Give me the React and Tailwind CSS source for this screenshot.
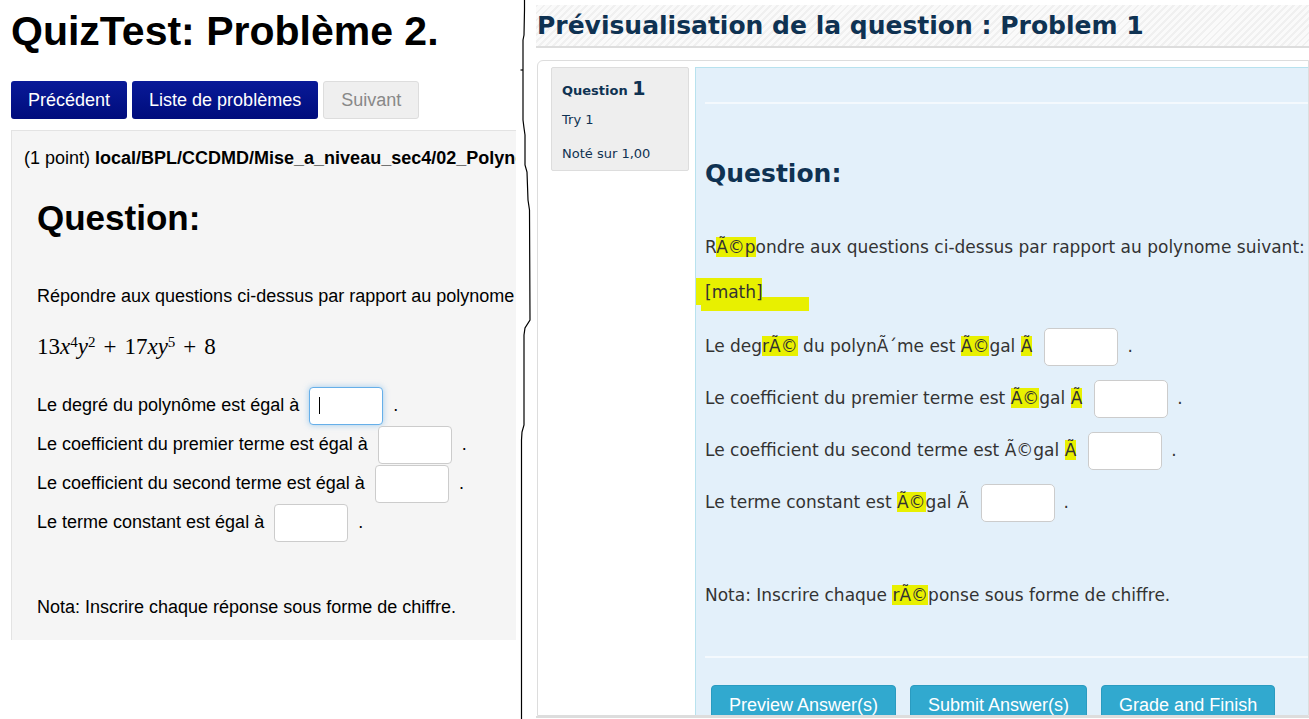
import React from 'react';

const hl = 'bg-[#e8f000]';

function LeftRow({ label, focused }) {
  return (
    <div className="flex items-center h-[39px]">
      <span>{label}</span>
      {focused ? (
        <div className="ml-[10px] w-[74px] h-[38px] rounded-[4px] border border-[#66afe9] bg-white shadow-[0_0_6px_rgba(102,175,233,0.6)] flex items-center pl-[9px]">
          <span className="block w-px h-[17px] bg-black" />
        </div>
      ) : (
        <div className="ml-[10px] w-[74px] h-[38px] rounded-[4px] border border-[#cccccc] bg-white" />
      )}
      <span className="ml-[10px]">.</span>
    </div>
  );
}

function RightRow({ children }) {
  return (
    <div className="flex items-center h-[52px]">
      <span className="whitespace-pre">{children}</span>
      <div className="ml-[12px] w-[74px] h-[38px] rounded-[5px] border border-[#cccccc] bg-white" />
      <span className="ml-[9px]">.</span>
    </div>
  );
}

function Divider() {
  return (
    <div className="w-[20px] shrink-0 h-[719px]">
      <svg width="20" height="719" viewBox="516 0 20 719" fill="none" stroke="#000" strokeWidth="1.2">
        <polyline points="524.5,0 524.5,10 524,35 523,40 523,120 524,128 525,135 525,165 527,172 528,200 529.5,210 530,320 525,328 524,335 524,425 522,432 521.5,440 521.5,719" />
        <line x1="520.5" y1="70" x2="523" y2="70" />
      </svg>
    </div>
  );
}

export default function App() {
  return (
    <div className="flex w-[1309px] h-[719px] overflow-hidden bg-white">
      {/* WeBWorK side */}
      <div className="w-[516px] shrink-0 overflow-hidden font-['Liberation_Sans',Arial,sans-serif] text-black">
        <h1 className="ml-[11px] mt-[7px] text-[41px] leading-[48px] font-bold whitespace-nowrap">QuizTest: Problème 2.</h1>
        <div className="flex gap-[5px] ml-[11px] mt-[26px]">
          <button className="h-[38px] px-[17px] rounded-[3px] bg-gradient-to-b from-[#0a1a98] to-[#000c7c] text-white text-[18px]">Précédent</button>
          <button className="h-[38px] px-[17px] rounded-[3px] bg-gradient-to-b from-[#0a1a98] to-[#000c7c] text-white text-[18px]">Liste de problèmes</button>
          <button className="h-[38px] px-[17px] rounded-[3px] bg-[#efefef] border border-[#dddddd] text-[#888888] text-[18px]">Suivant</button>
        </div>
        <div className="ml-[11px] mt-[11px] w-[520px] h-[510px] bg-[#f5f5f5] border-l border-t border-[#e3e3e3] text-[18px]">
          <div className="pl-[12px] pt-[16px] leading-[22px] whitespace-nowrap">
            (1 point) <span className="font-bold">local/BPL/CCDMD/Mise_a_niveau_sec4/02_Polynomes/probleme2.pg</span>
          </div>
          <div className="pl-[25px]">
            <h2 className="mt-[29px] text-[35px] leading-[40px] font-bold">Question:</h2>
            <p className="mt-[47px] leading-[22px] whitespace-nowrap">Répondre aux questions ci-dessus par rapport au polynome suivant:</p>
            <p className="mt-[27px] leading-[26px] font-['Liberation_Serif','Times_New_Roman',serif] text-[23px] whitespace-nowrap">
              13<i>x</i><sup className="text-[15px]">4</sup><i>y</i><sup className="text-[15px]">2</sup>
              <span className="mx-[8px]">+</span>17<i>xy</i><sup className="text-[15px]">5</sup>
              <span className="mx-[8px]">+</span>8
            </p>
            <div className="mt-[26px]">
              <LeftRow label="Le degré du polynôme est égal à" focused />
              <LeftRow label="Le coefficient du premier terme est égal à" />
              <LeftRow label="Le coefficient du second terme est égal à" />
              <LeftRow label="Le terme constant est égal à" />
            </div>
            <p className="mt-[54px] leading-[22px]">Nota: Inscrire chaque réponse sous forme de chiffre.</p>
          </div>
        </div>
      </div>

      <Divider />

      {/* Moodle side */}
      <div className="flex-1 min-w-0 font-['DejaVu_Sans',Verdana,sans-serif] text-[#333333]">
        <div className="mt-[5px] h-[43px] border-b-2 border-[#dddddd] bg-[repeating-linear-gradient(135deg,#f0f0f0_0px,#f0f0f0_2px,#fafafa_2px,#fafafa_5px)] flex items-center">
          <h1 className="pl-[1px] text-[25px] font-bold text-[#0f3252] whitespace-nowrap">Prévisualisation de la question : Problem 1</h1>
        </div>
        <div className="mt-[12px] ml-[1px] h-[656px] border border-[#dddddd] rounded-tl-[6px] flex gap-[6px] pl-[13px] pt-[6px]">
          <div className="w-[138px] h-[104px] shrink-0 bg-[#eeeeee] border border-[#dddddd] rounded-[2px] pl-[10px] pt-[6px] text-[#0f3252]">
            <div className="font-bold text-[13px]">Question <span className="text-[19px]">1</span></div>
            <div className="text-[13px] mt-[7px]">Try 1</div>
            <div className="text-[13px] mt-[15px]">Noté sur 1,00</div>
          </div>
          <div className="flex-1 overflow-hidden bg-[#e3f0fa] border-l border-t border-[#b8e2ee] pl-[9px] text-[17px]">
            <div className="h-[36px] border-b-2 border-[#f4f9fd]" />
            <h2 className="mt-[55px] text-[25px] leading-[30px] font-bold text-[#0f3252]">Question:</h2>
            <p className="mt-[47px] leading-[22px] whitespace-nowrap">R<span className={hl}>Ã©p</span>ondre aux questions ci-dessus par rapport au polynome suivant:</p>
            <div className="relative mt-[22px] h-[32px] leading-[24px]">
              <span className="absolute -left-[9px] top-[-2px] w-[66px] h-[27px] bg-[#e8f000]" />
              <span className="absolute -left-[4px] top-[17px] w-[108px] h-[14px] bg-[#e8f000]" />
              <span className="relative">[math]</span>
            </div>
            <div className="mt-[9px]">
              <RightRow>Le deg<span className={hl}>rÃ©</span> du polynÃ´me est <span className={hl}>Ã©</span>gal <span className={hl}>Ã</span></RightRow>
              <RightRow>Le coefficient du premier terme est <span className={hl}>Ã©</span>gal <span className={hl}>Ã</span></RightRow>
              <RightRow>Le coefficient du second terme est Ã©gal <span className={hl}>Ã</span></RightRow>
              <RightRow>Le terme constant est <span className={hl}>Ã©</span>gal Ã</RightRow>
            </div>
            <p className="mt-[55px] leading-[22px]">Nota: Inscrire chaque <span className={hl}>rÃ©</span>ponse sous forme de chiffre.</p>
            <div className="mt-[50px] border-t-2 border-[#f4f9fd]" />
            <div className="flex gap-[14px] mt-[27px] ml-[6px] font-['Liberation_Sans',Arial,sans-serif] text-[18px] text-white">
              <button className="h-[40px] px-[17px] whitespace-nowrap rounded-t-[4px] bg-[#31a9cf] border border-[#2a9bc0]">Preview Answer(s)</button>
              <button className="h-[40px] px-[17px] whitespace-nowrap rounded-t-[4px] bg-[#31a9cf] border border-[#2a9bc0]">Submit Answer(s)</button>
              <button className="h-[40px] px-[17px] whitespace-nowrap rounded-t-[4px] bg-[#31a9cf] border border-[#2a9bc0]">Grade and Finish</button>
            </div>
          </div>
        </div>
        <div className="h-[2px] bg-[#dddddd]" />
      </div>
    </div>
  );
}
